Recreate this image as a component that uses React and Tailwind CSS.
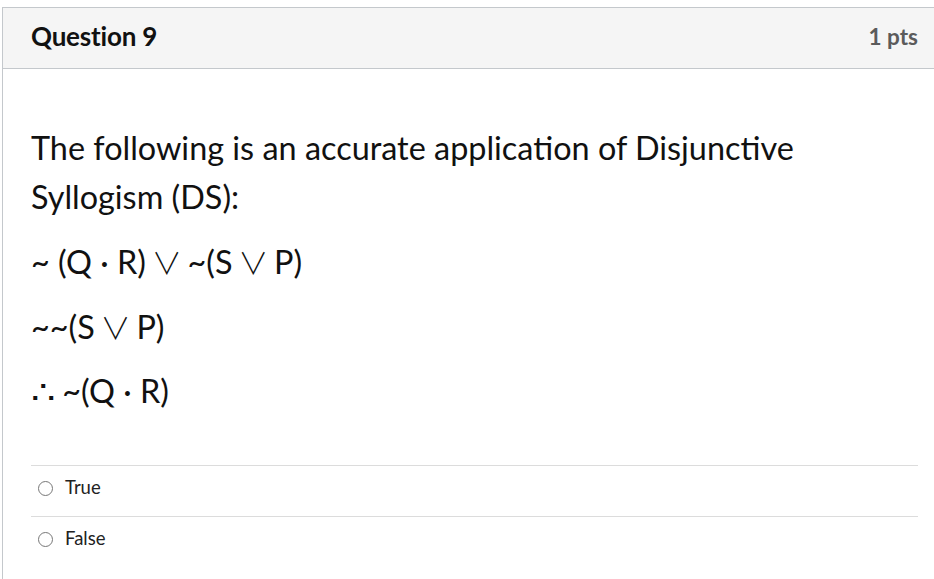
export default function App() {
  const font = { fontFamily: "Lato, 'Noto Sans', sans-serif" };
  const Or = () => (
    <span className="text-[30px] leading-none mx-[-2.5px]" style={{ fontFamily: "'Noto Sans CJK JP', 'DejaVu Sans', sans-serif", fontWeight: 300 }}>∨</span>
  );
  return (
    <div className="w-[934px] h-[579px] bg-white overflow-hidden pt-[7px] pl-[2px]" style={font}>
      <div className="border-t border-l border-[#c4c8cc] h-full">
        <div className="h-[61px] bg-[#f5f5f5] border-b border-[#c4c8cc] flex items-center justify-between pl-[28px] pr-[16px]">
          <div className="text-[26px] font-bold text-[#111] tracking-[-0.2px] -mt-[3px]">Question 9</div>
          <div className="text-[22.5px] font-bold text-[#5b5b5b] -mt-[3px]">1 pts</div>
        </div>
        <div className="pl-[28px] pr-[16px] pt-[54px]">
          <div className="text-[32.4px] leading-[49px] text-[#111]">
            <p className="mb-[16px]">The following is an accurate application of Disjunctive<br />Syllogism (DS):</p>
            <p className="mb-[16px]">~ (Q · R) <Or /> ~(S <Or /> P)</p>
            <p className="mb-[15px]">~~(S <Or /> P)</p>
            <p><span className="inline-block scale-x-[1.2] origin-left mr-[3px]">∴</span> ~(Q · R)</p>
          </div>
          <div className="mt-[50px]">
            <div className="border-t border-[#dcdcdc] h-[51px] flex items-center">
              <span className="w-[15px] h-[15px] rounded-full border border-[#777] ml-[7px] mr-[12px] -mt-[5px]"></span>
              <span className="text-[18.5px] text-[#222] -mt-[6px]">True</span>
            </div>
            <div className="border-t border-[#dcdcdc] h-[51px] flex items-center">
              <span className="w-[15px] h-[15px] rounded-full border border-[#777] ml-[7px] mr-[12px] -mt-[5px]"></span>
              <span className="text-[18.5px] text-[#222] -mt-[6px]">False</span>
            </div>
          </div>
        </div>
      </div>
    </div>
  );
}
